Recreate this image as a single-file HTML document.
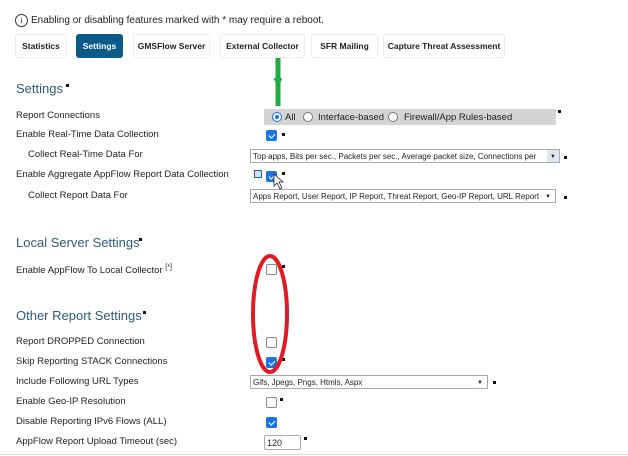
<!DOCTYPE html>
<html><head><meta charset="utf-8"><style>
body{margin:0;width:628px;height:456px;background:#fff;font-family:"Liberation Sans",sans-serif;position:relative;overflow:hidden;color:#222}
.a{position:absolute;white-space:nowrap}
.l{font-size:9.5px;color:#222}
.h{font-size:13px;color:#2f5a7e}
.tab{position:absolute;top:34px;height:22px;border:1px solid #eee;background:#fff;font-size:8.5px;font-weight:bold;line-height:22px;text-align:center;border-radius:3px;color:#222}
.cb{position:absolute;width:9px;height:9px;border:1px solid #888;border-radius:2px;background:#fff}
.cc{background:#1a73e8;border-color:#1a73e8}
.cc:after{content:"";position:absolute;left:2.5px;top:0.5px;width:2.5px;height:5px;border:solid #fff;border-width:0 1.5px 1.5px 0;transform:rotate(45deg)}
.sel{position:absolute;height:14px;border:1px solid #aaa;background:#fff;font-size:8px;line-height:14px;padding-left:2px;box-sizing:border-box}
.tk{position:absolute;width:3px;height:3px;background:#111}
</style></head><body>
<div class="a" style="left:15px;top:14px;width:11px;height:11px;border:1px solid #333;border-radius:50%;font-size:8px;text-align:center;line-height:11px">i</div>
<div class="a l" style="left:31px;top:15px;font-size:10px">Enabling or disabling features marked with * may require a reboot.</div>
<div class="tab" style="left:15px;width:50px">Statistics</div>
<div class="tab" style="left:76px;width:45px;background:#0b5a8a;color:#fff;border-color:#0b5a8a">Settings</div>
<div class="tab" style="left:133px;width:75px">GMSFlow Server</div>
<div class="tab" style="left:220px;width:83px">External Collector</div>
<div class="tab" style="left:311px;width:65px">SFR Mailing</div>
<div class="tab" style="left:383px;width:120px">Capture Threat Assessment</div>

<div class="a h" style="left:16px;top:81px">Settings</div><div class="tk" style="left:66px;top:84px"></div>
<div class="a l" style="left:16px;top:110px">Report Connections</div>
<div class="a l" style="left:16px;top:129px">Enable Real-Time Data Collection</div>
<div class="a l" style="left:28px;top:149px">Collect Real-Time Data For</div>
<div class="a l" style="left:16px;top:169px">Enable Aggregate AppFlow Report Data Collection</div>
<div class="a l" style="left:28px;top:190px">Collect Report Data For</div>
<div class="a h" style="left:16px;top:235px">Local Server Settings</div><div class="tk" style="left:139px;top:238px"></div>
<div class="a l" style="left:16px;top:264px">Enable AppFlow To Local Collector <sup style="font-size:7px">[*]</sup></div>
<div class="a h" style="left:16px;top:308px">Other Report Settings</div><div class="tk" style="left:143px;top:311px"></div>
<div class="a l" style="left:16px;top:336px">Report DROPPED Connection</div>
<div class="a l" style="left:16px;top:356px">Skip Reporting STACK Connections</div>
<div class="a l" style="left:16px;top:376px">Include Following URL Types</div>
<div class="a l" style="left:16px;top:396px">Enable Geo-IP Resolution</div>
<div class="a l" style="left:16px;top:416px">Disable Reporting IPv6 Flows (ALL)</div>
<div class="a l" style="left:16px;top:436px">AppFlow Report Upload Timeout (sec)</div>

<div class="a" style="left:264px;top:109px;width:292px;height:16px;background:#d4d4d4"></div>
<div class="a" style="left:272px;top:112px;width:8px;height:8px;border:1px solid #1a73e8;border-radius:50%;background:#fff"><div style="margin:2px;width:4px;height:4px;border-radius:50%;background:#1a73e8"></div></div>
<div class="a l" style="left:285px;top:112px">All</div>
<div class="a" style="left:303px;top:112px;width:8px;height:8px;border:1px solid #777;border-radius:50%;background:#fff"></div>
<div class="a l" style="left:318px;top:112px">Interface-based</div>
<div class="a" style="left:388px;top:112px;width:8px;height:8px;border:1px solid #777;border-radius:50%;background:#fff"></div>
<div class="a l" style="left:404px;top:112px">Firewall/App Rules-based</div>
<div class="tk" style="left:558px;top:110px"></div>

<div class="cb cc" style="left:266px;top:130px"></div><div class="tk" style="left:282px;top:133px"></div>
<div class="sel" style="left:250px;top:149px;width:310px">Top apps, Bits per sec., Packets per sec., Average packet size, Connections per<span style="position:absolute;right:0;top:0;width:12px;height:12px;background:#dfe8ef;font-size:6px;text-align:center">&#9660;</span></div>
<div class="tk" style="left:564px;top:156px"></div>
<div class="a" style="left:254px;top:170px;width:6px;height:6px;border:1px solid #2a5f9e;background:#cfe0f5"></div>
<div class="cb cc" style="left:266px;top:171px"></div><div class="tk" style="left:282px;top:172px"></div>
<div class="sel" style="left:250px;top:189px;width:306px">Apps Report, User Report, IP Report, Threat Report, Geo-IP Report, URL Report<span style="position:absolute;right:4px;font-size:6px">&#9660;</span></div>
<div class="tk" style="left:564px;top:196px"></div>

<div class="cb" style="left:266px;top:264px"></div><div class="tk" style="left:282px;top:265px"></div>
<div class="cb" style="left:266px;top:337px"></div>
<div class="cb cc" style="left:266px;top:357px"></div><div class="tk" style="left:282px;top:358px"></div>
<div class="sel" style="left:250px;top:375px;width:238px">Gifs, Jpegs, Pngs, Htmls, Aspx<span style="position:absolute;right:4px;font-size:6px">&#9660;</span></div>
<div class="tk" style="left:493px;top:381px"></div>
<div class="cb" style="left:266px;top:397px"></div><div class="tk" style="left:280px;top:398px"></div>
<div class="cb cc" style="left:266px;top:417px"></div>
<div class="sel" style="left:264px;top:435px;width:37px;height:15px;font-size:9px;border-radius:2px">120</div>
<div class="tk" style="left:304px;top:437px"></div>
<div class="a" style="left:0;top:454px;width:628px;height:1px;background:#ddd"></div>

<svg class="a" style="left:0;top:0" width="628" height="456">
<path d="M278 58 L278 106" stroke="#1fae45" stroke-width="5" fill="none"/>
<path d="M275 78 L278 84 L281 78" stroke="#1fae45" stroke-width="3" fill="none"/>
<ellipse cx="270" cy="314" rx="17" ry="58" stroke="#e01b24" stroke-width="4" fill="none"/>
<path d="M274 174 L274 186 L277 183 L280 189 L282 188 L279 182 L283 182 Z" fill="#fff" stroke="#222" stroke-width="0.8"/>
</svg>
</body></html>
